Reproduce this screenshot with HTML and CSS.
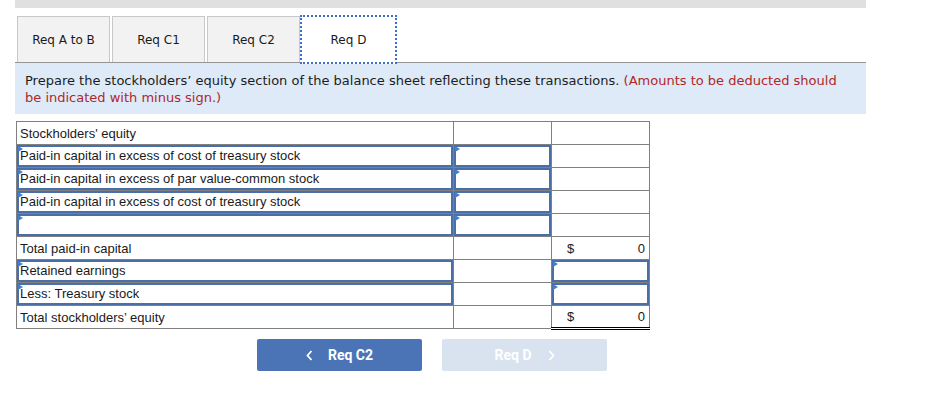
FILE: index.html
```html
<!DOCTYPE html>
<html>
<head>
<meta charset="utf-8">
<link rel="stylesheet" href="styles.css">
</head>
<body>
<div class="page">
  <div class="topbar"></div>
  <div class="tabs">
    <div class="tab">Req A to B</div>
    <div class="tab">Req C1</div>
    <div class="tab">Req C2</div>
    <div class="tab active">Req D</div>
  </div>
  <div class="prompt">
    Prepare the stockholders’ equity section of the balance sheet reflecting these transactions. <span class="note">(Amounts to be deducted should</span> <span class="note">be indicated with minus sign.)</span>
  </div>
  <table class="sheet">
    <tr><td class="lbl">Stockholders' equity</td><td></td><td></td></tr>
    <tr><td class="inp"><div class="box"><span class="flag"></span>Paid-in capital in excess of cost of treasury stock</div></td><td class="inp"><div class="box"><span class="flag"></span></div></td><td></td></tr>
    <tr><td class="inp"><div class="box"><span class="flag"></span>Paid-in capital in excess of par value-common stock</div></td><td class="inp"><div class="box"><span class="flag"></span></div></td><td></td></tr>
    <tr><td class="inp"><div class="box"><span class="flag"></span>Paid-in capital in excess of cost of treasury stock</div></td><td class="inp"><div class="box"><span class="flag"></span></div></td><td></td></tr>
    <tr><td class="inp"><div class="box"><span class="flag"></span></div></td><td class="inp"><div class="box"><span class="flag"></span></div></td><td></td></tr>
    <tr><td class="lbl">Total paid-in capital</td><td></td><td class="amt"><span>$</span><span>0</span></td></tr>
    <tr><td class="inp"><div class="box"><span class="flag"></span>Retained earnings</div></td><td></td><td class="inp"><div class="box"><span class="flag"></span></div></td></tr>
    <tr><td class="inp"><div class="box"><span class="flag"></span>Less: Treasury stock</div></td><td></td><td class="inp"><div class="box"><span class="flag"></span></div></td></tr>
    <tr><td class="lbl">Total stockholders’ equity</td><td></td><td class="amt total"><span>$</span><span>0</span></td></tr>
  </table>
  <div class="nav">
    <button class="btn prev"><svg class="chev left" width="7" height="11" viewBox="0 0 7 11"><path d="M5.5 1 L1.5 5.5 L5.5 10" fill="none" stroke="#ffffff" stroke-width="1.8"/></svg>Req C2</button>
    <button class="btn next">Req D<svg class="chev right" width="7" height="11" viewBox="0 0 7 11"><path d="M1.5 1 L5.5 5.5 L1.5 10" fill="none" stroke="#ffffff" stroke-width="1.8"/></svg></button>
  </div>
</div>
</body>
</html>
```
FILE: styles.css
```css
html, body {
  margin: 0;
  padding: 0;
  background: #ffffff;
}
.page {
  width: 851px;
  margin-left: 15px;
}
.topbar {
  height: 8px;
  background: #e0e0e0;
}
.tabs {
  display: flex;
  gap: 2px;
  padding: 7px 0 0 2px;
  border-bottom: 1px solid #959595;
  height: 47px;
}
.tab {
  width: 93px;
  box-sizing: border-box;
  border: 1px solid #c8c8c8;
  border-bottom: none;
  background: #f2f2f2;
  margin-top: 1px;
  display: flex;
  align-items: center;
  justify-content: center;
  font-family: "DejaVu Sans", Verdana, sans-serif;
  font-size: 12px;
  color: #1a1a1a;
}
.tab.active {
  width: 97px;
  margin-top: 0;
  margin-left: -2px;
  background: #ffffff;
  border: 2px dotted #3d6fc0;
  margin-bottom: -1px;
  height: 49px;
}
.prompt {
  background: #deeaf7;
  padding: 9px 10px 8px 10px;
  font-family: "DejaVu Sans", Verdana, sans-serif;
  font-size: 13px;
  line-height: 17px;
  color: #1d1d1d;
  height: 34px;
}
.note {
  color: #b0272a;
}
.sheet {
  margin-top: 7px;
  margin-left: 1px;
  border-collapse: collapse;
  font-family: "Liberation Sans", Arial, sans-serif;
  font-size: 13px;
  color: #1a1a1a;
}
.sheet td {
  border: 1px solid #808080;
  height: 23px;
  padding: 0;
  vertical-align: middle;
  width: 98px;
  box-sizing: border-box;
}
.sheet td:first-child {
  width: 437px;
}
.sheet td.lbl {
  padding-left: 3px;
}
.sheet td.inp {
  position: relative;
}
.box {
  position: relative;
  box-sizing: border-box;
  height: 22px;
  border: 2px solid #4a6ea8;
  padding-left: 1px;
  line-height: 18px;
}
.flag {
  position: absolute;
  left: -1px;
  top: -1px;
  width: 0;
  height: 0;
  border-top: 3px solid transparent;
  border-bottom: 3px solid transparent;
  border-left: 5px solid #3f7fd6;
}
.sheet td.amt {
  padding: 0 4px 0 15px;
}
.amt span:first-child {
  float: left;
}
.amt span:last-child {
  float: right;
}
.sheet td.amt.total {
  border-top: 1px solid #000000;
  border-bottom: 3px double #000000;
}
.nav {
  display: flex;
  gap: 20px;
  margin-top: 9px;
  padding-left: 242px;
}
.btn {
  width: 165px;
  height: 32px;
  border: none;
  border-radius: 2px;
  font-family: Roboto, "Liberation Sans", Arial, sans-serif;
  font-weight: bold;
  font-size: 14px;
  color: #ffffff;
  display: flex;
  align-items: center;
  justify-content: center;
  padding: 0;
}
.btn.prev {
  background: #4a74b5;
}
.btn.next {
  background: #d9e3ef;
}
.chev.left {
  margin-right: 15px;
}
.chev.right {
  margin-left: 16px;
}
```
